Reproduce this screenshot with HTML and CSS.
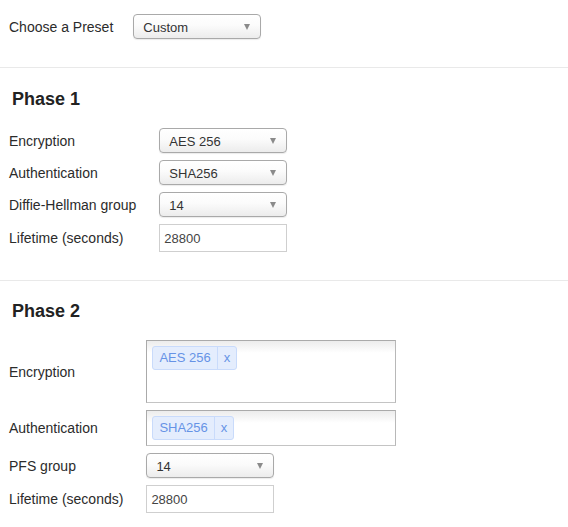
FILE: index.html
```html
<!DOCTYPE html>
<html>
  <head>
    <meta charset="utf-8" />
    <title>IPsec Settings</title>
    <link rel="stylesheet" href="styles.css">
  </head>
  <body>
    <div class="preset">
      <div class="form-grid">
        <label class="field-label">Choose a Preset</label>
        <div class="select">
          <span>Custom</span>
          <span class="caret"></span>
        </div>
      </div>
    </div>

    <div class="section">
      <h2>Phase 1</h2>
      <div class="form-grid">
        <label class="field-label">Encryption</label>
        <div class="select">
          <span>AES 256</span>
          <span class="caret"></span>
        </div>

        <label class="field-label">Authentication</label>
        <div class="select">
          <span>SHA256</span>
          <span class="caret"></span>
        </div>

        <label class="field-label">Diffie-Hellman group</label>
        <div class="select">
          <span>14</span>
          <span class="caret"></span>
        </div>

        <label class="field-label">Lifetime (seconds)</label>
        <input type="text" class="text-input" value="28800" />
      </div>
    </div>

    <div class="section">
      <h2>Phase 2</h2>
      <div class="form-grid">
        <label class="field-label">Encryption</label>
        <div class="multi-select tall">
          <span class="tag">
            <span class="tag-text">AES 256</span>
            <span class="tag-remove">x</span>
          </span>
        </div>

        <label class="field-label">Authentication</label>
        <div class="multi-select">
          <span class="tag">
            <span class="tag-text">SHA256</span>
            <span class="tag-remove">x</span>
          </span>
        </div>

        <label class="field-label">PFS group</label>
        <div class="select">
          <span>14</span>
          <span class="caret"></span>
        </div>

        <label class="field-label">Lifetime (seconds)</label>
        <input type="text" class="text-input" value="28800" />
      </div>
    </div>
  </body>
</html>
```

FILE: styles.css
```css
body {
  margin: 0;
  padding: 0;
  font-family: "Liberation Sans", Arial, sans-serif;
  font-size: 14px;
  color: #333;
  background: #fff;
}

.preset {
  padding: 14px 0 28px 9px;
}

.preset .form-grid {
  column-gap: 20px;
}

.section {
  border-top: 1px solid #e9e9e9;
  padding: 21px 0 28px 9px;
}

.section + .section {
  padding-top: 20px;
}

.section h2 {
  margin: 0 0 18px 3px;
  font-size: 18px;
  line-height: 21px;
  font-weight: bold;
  color: #222;
}

.form-grid {
  display: grid;
  grid-template-columns: auto 1fr;
  column-gap: 23px;
  row-gap: 7px;
  align-items: center;
  justify-items: start;
}

.field-label {
  white-space: nowrap;
  color: #2b2b2b;
}

.select {
  display: flex;
  align-items: center;
  justify-content: space-between;
  box-sizing: border-box;
  width: 128px;
  height: 25px;
  padding: 1px 10px 0 9px;
  border: 1px solid #a9a9a9;
  border-radius: 4px;
  background: linear-gradient(#ffffff 0%, #fbfbfb 45%, #ececec 100%);
  box-shadow: 0 1px 1px rgba(0, 0, 0, 0.08);
  color: #333;
  font-size: 13px;
}

.caret {
  width: 0;
  height: 0;
  border-left: 3.5px solid transparent;
  border-right: 3.5px solid transparent;
  border-top: 6px solid #8a8a8a;
}

.text-input {
  box-sizing: border-box;
  width: 128px;
  height: 28px;
  margin: 0;
  padding: 0 4px;
  border: 1px solid #cfcfcf;
  border-radius: 0;
  font-family: inherit;
  font-size: 13px;
  color: #444;
  outline: none;
}

.multi-select {
  display: flex;
  align-items: flex-start;
  box-sizing: border-box;
  width: 250px;
  height: 36px;
  padding: 5px;
  border: 1px solid #aaa;
  border-right-color: #b8b8b8;
  border-bottom-color: #c4c4c4;
  background: linear-gradient(#ececec 0%, #ffffff 12px);
}

.multi-select.tall {
  height: 63px;
}

.tag {
  display: inline-flex;
  align-items: stretch;
  height: 24px;
  box-sizing: border-box;
  border: 1px solid #c9dbfb;
  border-radius: 3px;
  background: #e4edfd;
  color: #6693e6;
  font-size: 13px;
  line-height: 22px;
}

.tag-text {
  padding: 0 6px 0 6px;
  border-right: 1px solid #c9dbfb;
}

.tag-remove {
  padding: 0 6px;
}
```
